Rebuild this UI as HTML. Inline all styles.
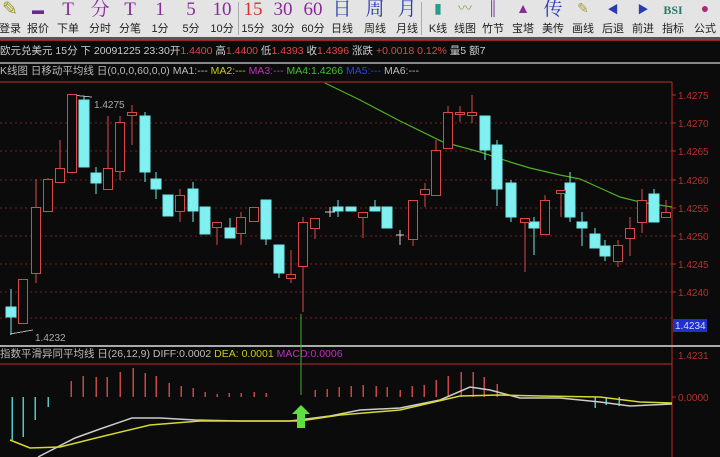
<!DOCTYPE html>
<html><head><meta charset="utf-8"><style>
*{margin:0;padding:0}
body{width:720px;height:457px;background:#0b0b0b;overflow:hidden;position:relative;font-family:"Liberation Sans","Noto Sans CJK SC",sans-serif}
#tb{position:absolute;left:0;top:0;width:720px;height:37px;background:#e4e4e4}
.b{position:absolute;top:0;width:30px;text-align:center}
.g{font-family:"Liberation Serif","Noto Serif CJK SC",serif;font-size:19px;line-height:20px;color:#8a2a9a;height:21px}
.l{font-size:11px;color:#222;line-height:13px;margin-top:2px}
.t{position:absolute;font-size:10.5px;white-space:nowrap;line-height:13px}
</style></head><body>
<div id="tb">
<div class="b" style="left:-5px"><div class="g" style="color:#9a9a20">✎</div><div class="l">登录</div></div>
<div class="b" style="left:23px"><div class="g" style="font-size:12px;color:#6a2a8a">▬</div><div class="l">报价</div></div>
<div class="b" style="left:53px"><div class="g">T</div><div class="l">下单</div></div>
<div class="b" style="left:85px"><div class="g">分</div><div class="l">分时</div></div>
<div class="b" style="left:115px"><div class="g">T</div><div class="l">分笔</div></div>
<div class="b" style="left:145px"><div class="g">1</div><div class="l">1分</div></div>
<div class="b" style="left:176px"><div class="g">5</div><div class="l">5分</div></div>
<div class="b" style="left:207px"><div class="g">10</div><div class="l">10分</div></div>
<div style="position:absolute;left:238px;top:2px;width:1px;height:33px;background:#aaa"></div>
<div class="b" style="left:238px"><div class="g" style="color:#d83030">15</div><div class="l">15分</div></div>
<div class="b" style="left:268px"><div class="g">30</div><div class="l">30分</div></div>
<div class="b" style="left:298px"><div class="g">60</div><div class="l">60分</div></div>
<div class="b" style="left:327px"><div class="g" style="color:#2a3ab0">日</div><div class="l">日线</div></div>
<div class="b" style="left:360px"><div class="g" style="color:#2a3ab0">周</div><div class="l">周线</div></div>
<div class="b" style="left:392px"><div class="g" style="color:#2a3ab0">月</div><div class="l">月线</div></div>
<div style="position:absolute;left:421px;top:2px;width:1px;height:33px;background:#aaa"></div>
<div class="b" style="left:423px"><div class="g" style="color:#2a9a8a;font-size:14px">▮</div><div class="l">K线</div></div>
<div class="b" style="left:450px"><div class="g" style="color:#6a9a30;font-size:14px">〰</div><div class="l">线图</div></div>
<div class="b" style="left:478px"><div class="g" style="color:#7a3aa0;font-size:14px">║</div><div class="l">竹节</div></div>
<div class="b" style="left:508px"><div class="g" style="font-size:14px">▲</div><div class="l">宝塔</div></div>
<div class="b" style="left:538px"><div class="g" style="color:#2a3ab0">传</div><div class="l">美传</div></div>
<div class="b" style="left:568px"><div class="g" style="color:#a0a040;font-size:14px">✎</div><div class="l">画线</div></div>
<div class="b" style="left:598px"><div class="g" style="color:#2a3ab0;font-size:11px">◀</div><div class="l">后退</div></div>
<div class="b" style="left:628px"><div class="g" style="color:#2a3ab0;font-size:11px">▶</div><div class="l">前进</div></div>
<div class="b" style="left:658px"><div class="g" style="color:#2a7a6a;font-size:12px;font-weight:bold">BSI</div><div class="l">指标</div></div>
<div class="b" style="left:690px"><div class="g" style="color:#b02a7a;font-size:14px">●</div><div class="l">公式</div></div>
</div>
<div style="position:absolute;left:0;top:37px;width:720px;height:3px;background:#555"></div>
<div style="position:absolute;left:0;top:40px;width:720px;height:1px;background:#a02020"></div>
<div class="t" style="left:0;top:45px;color:#ccc">欧元兑美元 15分 下 20091225 23:30开<span style="color:#e04848">1.4400</span> 高<span style="color:#e04848">1.4400</span> 低<span style="color:#e04848">1.4393</span> 收<span style="color:#e04848">1.4396</span> 涨跌 <span style="color:#e04848">+0.0018 0.12%</span> 量5 额7</div>
<div style="position:absolute;left:0;top:62px;width:720px;height:2px;background:#888"></div>
<div class="t" style="left:0;top:65px;color:#bbb">K线图 日移动平均线 日(0,0,0,60,0,0) MA1:--- <span style="color:#c8c820">MA2:---</span> <span style="color:#c030c0">MA3:---</span> <span style="color:#40c030">MA4:1.4266</span> <span style="color:#3040e0">MA5:---</span> MA6:---</div>
<div class="t" style="left:0;top:348px;color:#bbb">指数平滑异同平均线 日(26,12,9) DIFF:0.0002 <span style="color:#c8c820">DEA: 0.0001</span> <span style="color:#c030c0">MACD:0.0006</span></div>
<svg width="720" height="457" style="position:absolute;left:0;top:0" shape-rendering="crispEdges">
<g stroke="#c02828" stroke-width="1">
<line x1="0" y1="82" x2="672" y2="82"/>
<line x1="672" y1="82" x2="672" y2="457"/>
<line x1="0" y1="364" x2="672" y2="364"/>
</g>
<line x1="0" y1="346" x2="720" y2="346" stroke="#aaa" stroke-width="2"/>
<g stroke="#7a2020" stroke-dasharray="2,3">
<line x1="0" y1="123" x2="672" y2="123"/><line x1="0" y1="151" x2="672" y2="151"/><line x1="0" y1="180" x2="672" y2="180"/><line x1="0" y1="208" x2="672" y2="208"/><line x1="0" y1="236" x2="672" y2="236"/><line x1="0" y1="264" x2="672" y2="264"/><line x1="0" y1="292" x2="672" y2="292"/><line x1="0" y1="318" x2="672" y2="318"/>
</g>
<g stroke="#c02828"><line x1="672" y1="95" x2="676" y2="95"/><line x1="672" y1="123" x2="676" y2="123"/><line x1="672" y1="151" x2="676" y2="151"/><line x1="672" y1="180" x2="676" y2="180"/><line x1="672" y1="208" x2="676" y2="208"/><line x1="672" y1="236" x2="676" y2="236"/><line x1="672" y1="264" x2="676" y2="264"/><line x1="672" y1="292" x2="676" y2="292"/><line x1="672" y1="397" x2="676" y2="397"/></g>
<g fill="#b83030" font-size="10" font-family="Liberation Sans" shape-rendering="auto">
<text x="678" y="99">1.4275</text><text x="678" y="127">1.4270</text><text x="678" y="155">1.4265</text><text x="678" y="184">1.4260</text><text x="678" y="212">1.4255</text><text x="678" y="240">1.4250</text><text x="678" y="268">1.4245</text><text x="678" y="296">1.4240</text><text x="678" y="401">0.0000</text><text x="678" y="359">1.4231</text>
</g>
<rect x="673" y="319" width="34" height="13" fill="#2030d0"/>
<text x="675" y="329" fill="#ddd" font-size="10" font-family="Liberation Sans">1.4234</text>
<polyline fill="none" stroke="#50b020" stroke-width="1.2" shape-rendering="auto" points="325,83 360,100 400,121 443,142 480,152 510,162 530,168 560,175 580,179 600,188 620,197 640,202 672,207"/>
<g stroke="#aaa" fill="none"><polyline points="72,95 92,97"/><polyline points="10,334 33,330"/></g>
<g fill="#aaa" font-size="10" font-family="Liberation Sans" shape-rendering="auto"><text x="94" y="108">1.4275</text><text x="35" y="341">1.4232</text></g>
<!-- candles -->
<g id="c" stroke-width="1">
<g stroke="#70e8e8" fill="#80f0f0">
<line x1="11" y1="289" x2="11" y2="335"/><rect x="6" y="307" width="10" height="10"/>
<line x1="84" y1="96" x2="84" y2="167"/><rect x="79" y="100" width="10" height="67"/>
<line x1="96" y1="167" x2="96" y2="194"/><rect x="91" y="173" width="10" height="10"/>
<line x1="145" y1="112" x2="145" y2="182"/><rect x="140" y="116" width="10" height="56"/>
<line x1="156" y1="172" x2="156" y2="199"/><rect x="151" y="179" width="10" height="10"/>
<rect x="163" y="195" width="10" height="21"/>
<line x1="193" y1="182" x2="193" y2="222"/><rect x="188" y="189" width="10" height="22"/>
<rect x="200" y="207" width="10" height="27"/>
<line x1="230" y1="218" x2="230" y2="238"/><rect x="225" y="228" width="10" height="10"/>
<line x1="266" y1="200" x2="266" y2="245"/><rect x="261" y="200" width="10" height="39"/>
<line x1="279" y1="245" x2="279" y2="278"/><rect x="274" y="245" width="10" height="28"/>
<line x1="338" y1="200" x2="338" y2="217"/><rect x="333" y="207" width="10" height="4"/>
<rect x="346" y="207" width="10" height="4"/>
<line x1="375" y1="200" x2="375" y2="211"/><rect x="370" y="207" width="10" height="4"/>
<rect x="382" y="207" width="10" height="21"/>
<line x1="485" y1="116" x2="485" y2="160"/><rect x="480" y="116" width="10" height="34"/>
<line x1="497" y1="140" x2="497" y2="206"/><rect x="492" y="145" width="10" height="44"/>
<line x1="511" y1="180" x2="511" y2="222"/><rect x="506" y="183" width="10" height="34"/>
<line x1="534" y1="217" x2="534" y2="255"/><rect x="529" y="222" width="10" height="6"/>
<line x1="570" y1="172" x2="570" y2="222"/><rect x="565" y="183" width="10" height="34"/>
<line x1="582" y1="212" x2="582" y2="246"/><rect x="577" y="222" width="10" height="6"/>
<line x1="595" y1="228" x2="595" y2="248"/><rect x="590" y="234" width="10" height="14"/>
<line x1="605" y1="240" x2="605" y2="261"/><rect x="600" y="246" width="10" height="10"/>
<line x1="654" y1="189" x2="654" y2="222"/><rect x="649" y="194" width="10" height="28"/>
</g>
<g stroke="#d84848" fill="#0b0b0b">
<rect x="18.5" y="279.5" width="9" height="44"/>
<line x1="36" y1="179" x2="36" y2="283"/><rect x="31.5" y="207.5" width="9" height="66"/>
<line x1="48" y1="178" x2="48" y2="211"/><rect x="43.5" y="179.5" width="9" height="32"/>
<line x1="60" y1="140" x2="60" y2="182"/><rect x="55.5" y="168.5" width="9" height="14"/>
<rect x="67.5" y="94.5" width="9" height="78"/>
<line x1="108" y1="116" x2="108" y2="189"/><rect x="103.5" y="168.5" width="9" height="21"/>
<line x1="120" y1="116" x2="120" y2="180"/><rect x="115.5" y="122.5" width="9" height="49"/>
<line x1="132" y1="105" x2="132" y2="145"/><rect x="127.5" y="112.5" width="9" height="3"/>
<line x1="180" y1="189" x2="180" y2="222"/><rect x="175.5" y="195.5" width="9" height="16"/>
<line x1="217" y1="222" x2="217" y2="245"/><rect x="212.5" y="222.5" width="9" height="5"/>
<line x1="241" y1="212" x2="241" y2="245"/><rect x="236.5" y="217.5" width="9" height="16"/>
<rect x="249.5" y="207.5" width="9" height="14"/>
<line x1="291" y1="250" x2="291" y2="283"/><rect x="286.5" y="274.5" width="9" height="4"/>
<line x1="303" y1="217" x2="303" y2="312"/><rect x="298.5" y="222.5" width="9" height="44"/>
<line x1="315" y1="218" x2="315" y2="239"/><rect x="310.5" y="218.5" width="9" height="10"/>
<line x1="363" y1="212" x2="363" y2="238"/><rect x="358.5" y="212.5" width="9" height="5"/>
<line x1="413" y1="200" x2="413" y2="246"/><rect x="408.5" y="200.5" width="9" height="39"/>
<line x1="425" y1="183" x2="425" y2="207"/><rect x="420.5" y="189.5" width="9" height="5"/>
<line x1="436" y1="140" x2="436" y2="195"/><rect x="431.5" y="150.5" width="9" height="45"/>
<line x1="448" y1="106" x2="448" y2="148"/><rect x="443.5" y="112.5" width="9" height="36"/>
<line x1="460" y1="106" x2="460" y2="122"/><rect x="455.5" y="112.5" width="9" height="2"/>
<line x1="472" y1="95" x2="472" y2="123"/><rect x="467.5" y="112.5" width="9" height="3"/>
<line x1="525" y1="218" x2="525" y2="272"/><rect x="520.5" y="218.5" width="9" height="4"/>
<line x1="545" y1="195" x2="545" y2="234"/><rect x="540.5" y="200.5" width="9" height="34"/>
<line x1="561" y1="190" x2="561" y2="217"/><rect x="556.5" y="190.5" width="9" height="3"/>
<line x1="618" y1="240" x2="618" y2="267"/><rect x="613.5" y="245.5" width="9" height="16"/>
<line x1="630" y1="217" x2="630" y2="256"/><rect x="625.5" y="228.5" width="9" height="10"/>
<line x1="642" y1="189" x2="642" y2="233"/><rect x="637.5" y="200.5" width="9" height="22"/>
<line x1="666" y1="200" x2="666" y2="217"/><rect x="661.5" y="212.5" width="9" height="5"/>
</g>
<g stroke="#ccc"><line x1="325" y1="212" x2="335" y2="212"/><line x1="330" y1="207" x2="330" y2="217"/><line x1="396" y1="235" x2="404" y2="235"/><line x1="400" y1="230" x2="400" y2="245"/></g>
</g>
<line x1="301" y1="314" x2="301" y2="395" stroke="#40b030"/>
<!-- MACD -->
<g stroke="#50c8c8" stroke-width="1.5"><line x1="12" y1="397" x2="12" y2="440"/><line x1="23" y1="397" x2="23" y2="437"/><line x1="35" y1="397" x2="35" y2="420"/><line x1="48" y1="397" x2="48" y2="407"/><line x1="595" y1="397" x2="595" y2="408"/><line x1="606" y1="397" x2="606" y2="405"/><line x1="619" y1="397" x2="619" y2="406"/></g>
<g stroke="#c84848" stroke-width="1.5">
<line x1="71" y1="381" x2="71" y2="397"/><line x1="83" y1="376" x2="83" y2="397"/><line x1="96" y1="377" x2="96" y2="397"/><line x1="107" y1="377" x2="107" y2="397"/><line x1="120" y1="372" x2="120" y2="397"/><line x1="133" y1="368" x2="133" y2="397"/><line x1="145" y1="373" x2="145" y2="397"/><line x1="156" y1="376" x2="156" y2="397"/><line x1="169" y1="383" x2="169" y2="397"/><line x1="181" y1="386" x2="181" y2="397"/><line x1="193" y1="388" x2="193" y2="397"/><line x1="205" y1="392" x2="205" y2="397"/><line x1="217" y1="394" x2="217" y2="397"/><line x1="229" y1="393" x2="229" y2="397"/><line x1="241" y1="393" x2="241" y2="397"/><line x1="254" y1="392" x2="254" y2="397"/><line x1="266" y1="393" x2="266" y2="397"/>
<line x1="315" y1="390" x2="315" y2="397"/><line x1="327" y1="389" x2="327" y2="397"/><line x1="339" y1="387" x2="339" y2="397"/><line x1="351" y1="386" x2="351" y2="397"/><line x1="363" y1="385" x2="363" y2="397"/><line x1="376" y1="386" x2="376" y2="397"/><line x1="387" y1="387" x2="387" y2="397"/><line x1="400" y1="390" x2="400" y2="397"/><line x1="412" y1="386" x2="412" y2="397"/><line x1="424" y1="385" x2="424" y2="397"/><line x1="436" y1="380" x2="436" y2="397"/><line x1="448" y1="376" x2="448" y2="397"/><line x1="461" y1="372" x2="461" y2="397"/><line x1="473" y1="372" x2="473" y2="397"/><line x1="484" y1="377" x2="484" y2="397"/><line x1="497" y1="384" x2="497" y2="397"/>
</g>
<polyline fill="none" stroke="#ccc" stroke-width="1.5" shape-rendering="auto" points="38,457 75,438 100,429 132,418 160,418 195,420 240,421 290,421 330,416 360,410 400,408 440,400 470,387 490,390 520,398 560,398 600,402 630,406 650,405 672,404"/>
<polyline fill="none" stroke="#d8d830" stroke-width="1.5" shape-rendering="auto" points="10,440 30,448 60,447 100,437 150,425 200,421 300,421 340,415 400,410 460,396 500,395 540,396 600,397 640,402 672,403"/>
<path d="M301 405 L292 414 L297 414 L297 428 L305 428 L305 414 L310 414 Z" fill="#60e040" shape-rendering="auto"/>
</svg>
</body></html>
